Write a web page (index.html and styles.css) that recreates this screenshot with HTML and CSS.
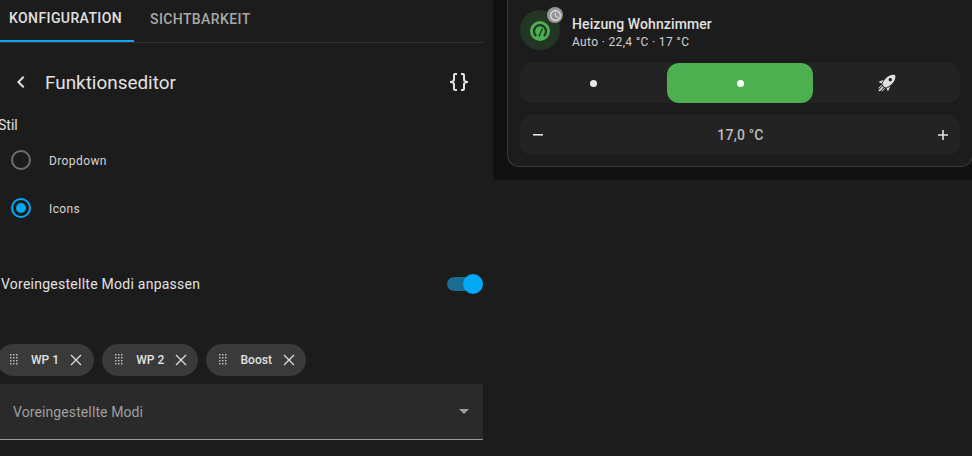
FILE: index.html
```html
<!DOCTYPE html>
<html lang="de">
<head>
<meta charset="utf-8">
<title>Funktionseditor</title>
<link rel="stylesheet" href="styles.css">
</head>
<body>
<main class="editor">
  <nav class="tabs">
    <div class="tab active">KONFIGURATION</div>
    <div class="tab">SICHTBARKEIT</div>
  </nav>
  <header class="head">
    <svg class="back" viewBox="0 0 24 24"><path d="M15.41 16.58L10.83 12l4.58-4.59L14 6l-6 6 6 6z"/></svg>
    <h1 class="title">Funktionseditor</h1>
    <svg class="code" viewBox="0 0 24 24"><path d="M8 3a2 2 0 0 0-2 2v4a2 2 0 0 1-2 2H3v2h1a2 2 0 0 1 2 2v4a2 2 0 0 0 2 2h2v-2H8v-5a2 2 0 0 0-2-2 2 2 0 0 0 2-2V5h2V3m6 0a2 2 0 0 1 2 2v4a2 2 0 0 0 2 2h1v2h-1a2 2 0 0 0-2 2v4a2 2 0 0 1-2 2h-2v-2h2v-5a2 2 0 0 1 2-2 2 2 0 0 1-2-2V5h-2V3h2z"/></svg>
  </header>
  <div class="group-label">Stil</div>
  <div class="radio-row"><span class="radio"></span><span class="radio-label">Dropdown</span></div>
  <div class="radio-row"><span class="radio on"></span><span class="radio-label">Icons</span></div>
  <div class="switch-row">
    <span class="switch-label">Voreingestellte Modi anpassen</span>
    <span class="switch"><span class="thumb"></span></span>
  </div>
  <div class="chips">
    <div class="chip chip-first">
      <svg class="grip" viewBox="0 0 8 12"><path d="M0 0h1.500v1.500H0zM3 0h1.500v1.500H3zM6 0h1.500v1.500H6zM0 3h1.500v1.500H0zM3 3h1.500v1.500H3zM6 3h1.500v1.500H6zM0 6h1.500v1.500H0zM3 6h1.500v1.500H3zM6 6h1.500v1.500H6zM0 9h1.500v1.500H0zM3 9h1.500v1.500H3zM6 9h1.500v1.500H6z"/></svg>
      <span class="chip-text">WP 1</span>
      <svg class="x" viewBox="0 0 12 12"><path d="M1 1l10 10M11 1L1 11"/></svg>
    </div>
    <div class="chip">
      <svg class="grip" viewBox="0 0 8 12"><path d="M0 0h1.500v1.500H0zM3 0h1.500v1.500H3zM6 0h1.500v1.500H6zM0 3h1.500v1.500H0zM3 3h1.500v1.500H3zM6 3h1.500v1.500H6zM0 6h1.500v1.500H0zM3 6h1.500v1.500H3zM6 6h1.500v1.500H6zM0 9h1.500v1.500H0zM3 9h1.500v1.500H3zM6 9h1.500v1.500H6z"/></svg>
      <span class="chip-text">WP 2</span>
      <svg class="x" viewBox="0 0 12 12"><path d="M1 1l10 10M11 1L1 11"/></svg>
    </div>
    <div class="chip">
      <svg class="grip" viewBox="0 0 8 12"><path d="M0 0h1.500v1.500H0zM3 0h1.500v1.500H3zM6 0h1.500v1.500H6zM0 3h1.500v1.500H0zM3 3h1.500v1.500H3zM6 3h1.500v1.500H6zM0 6h1.500v1.500H0zM3 6h1.500v1.500H3zM6 6h1.500v1.500H6zM0 9h1.500v1.500H0zM3 9h1.500v1.500H3zM6 9h1.500v1.500H6z"/></svg>
      <span class="chip-text">Boost</span>
      <svg class="x" viewBox="0 0 12 12"><path d="M1 1l10 10M11 1L1 11"/></svg>
    </div>
  </div>
  <div class="select">
    <span class="select-label">Voreingestellte Modi</span>
    <span class="caret"></span>
  </div>
</main>
<aside class="preview">
  <section class="card">
    <div class="entity">
      <div class="avatar">
        <svg class="gauge" viewBox="0 0 24 24"><circle class="gauge-disc" cx="12" cy="12" r="10"/><path class="gauge-arc" d="M8.200 16.800A6 6 0 1 1 15.800 16.800"/><path class="gauge-needle" d="M10.800 17.500L14.500 9.500"/></svg>
        <span class="badge"><svg viewBox="0 0 24 24"><path d="M12,20A8,8 0 0,0 20,12A8,8 0 0,0 12,4A8,8 0 0,0 4,12A8,8 0 0,0 12,20M12,2A10,10 0 0,1 22,12A10,10 0 0,1 12,22C6.47,22 2,17.5 2,12A10,10 0 0,1 12,2M12.5,7V12.25L17,14.92L16.25,16.15L11,13V7H12.5Z"/></svg></span>
      </div>
      <div class="info">
        <div class="name">Heizung Wohnzimmer</div>
        <div class="state">Auto · 22,4 °C · 17 °C</div>
      </div>
    </div>
    <div class="modes">
      <div class="mode"><span class="dot"></span></div>
      <div class="mode selected"><span class="dot"></span></div>
      <div class="mode"><svg class="rocket" viewBox="0 0 24 24"><path d="M13.13 22.19L11.5 18.36C13.07 17.78 14.54 17 15.9 16.09L13.13 22.19M5.64 12.5L1.81 10.87L7.91 8.1C7 9.46 6.22 10.93 5.64 12.5M21.61 2.39C21.61 2.39 16.66 .269 11 5.93C8.81 8.12 7.5 10.53 6.65 12.64C6.37 13.39 6.56 14.21 7.11 14.77L9.24 16.89C9.79 17.45 10.61 17.63 11.36 17.35C13.5 16.53 15.88 15.19 18.07 13C23.73 7.34 21.61 2.39 21.61 2.39M14.54 9.46C13.76 8.68 13.76 7.41 14.54 6.63S16.59 5.85 17.37 6.63C18.14 7.41 18.15 8.68 17.37 9.46C16.59 10.24 15.32 10.24 14.54 9.46M6.24 22L9.88 18.36C9.54 18.27 9.21 18.12 8.91 17.91L4.83 22H6.24M2 22H3.41L8.18 17.24L6.76 15.83L2 20.59V22M2 19.17L6.09 15.09C5.88 14.79 5.73 14.47 5.64 14.12L2 17.76V19.17Z"/></svg></div>
    </div>
    <div class="stepper">
      <svg class="step" viewBox="0 0 12 12"><path d="M1 5h10v1.600H1z"/></svg>
      <span class="temp">17,0 °C</span>
      <svg class="step" viewBox="0 0 12 12"><path d="M5.200 1h1.600v4.200H11v1.600H6.800V11H5.200V6.800H1V5.200h4.200z"/></svg>
    </div>
  </section>
</aside>
</body>
</html>
```
FILE: styles.css
```css
* { box-sizing: border-box; }
html, body { margin: 0; height: 456px; overflow: hidden; }
body {
  display: flex;
  align-items: flex-start;
  background: #1c1c1c;
  color: #e1e1e1;
  font-family: Roboto, "Liberation Sans", sans-serif;
}
.editor { width: 483px; flex: none; margin-right: 10px; }

.tabs { display: flex; height: 43px; border-bottom: 1px solid #333; }
.tab {
  height: 42px;
  padding: 0 16px;
  display: flex;
  align-items: center;
  padding-bottom: 5px;
  font-size: 14px;
  font-weight: 500;
  letter-spacing: .4px;
  color: #a8a8a8;
}
.tab.active {
  padding: 0 12px 5px 9px;
  width: 134px;
  color: #e1e1e1;
  border-bottom: 2px solid #03a9f4;
}

.head { display: flex; align-items: center; height: 40px; margin-top: 19px; padding: 0 12px 0 9px; }
.back { width: 24px; height: 24px; fill: #e1e1e1; }
.title { flex: 1; margin: 0 0 0 12px; font-size: 18.9px; font-weight: 400; color: #e1e1e1; }
.code { width: 24px; height: 24px; fill: #e1e1e1; }

.group-label { margin: 13px 0 0 -2px; height: 20px; line-height: 20px; font-size: 14px; }
.radio-row { display: flex; align-items: center; height: 48px; padding-left: 11px; position: relative; top: 1px; }
.radio { width: 20px; height: 20px; border: 2px solid #6f6f6f; border-radius: 50%; position: relative; flex: none; }
.radio.on { border-color: #03a9f4; }
.radio.on::after { content: ""; position: absolute; inset: 3px; border-radius: 50%; background: #03a9f4; }
.radio-label { margin-left: 18px; font-size: 12px; line-height: 14px; margin-top: 2px; letter-spacing: .4px; color: #d6d6d6; }

.switch-row { display: flex; align-items: center; justify-content: space-between; height: 40px; margin-top: 33px; padding-left: 1px; }
.switch-label { font-size: 14px; letter-spacing: .25px; color: #e1e1e1; }
.switch { position: relative; width: 28px; height: 14px; margin-right: 8px; border-radius: 7px; background: #1a6c92; }
.thumb { position: absolute; right: -8px; top: -3px; width: 20px; height: 20px; border-radius: 50%; background: #03a9f4; }

.chips { display: flex; gap: 8px; margin-top: 40px; }
.chip {
  display: flex;
  align-items: center;
  height: 32px;
  padding: 0 11px 0 13px;
  border-radius: 16px;
  background: #3a3a3a;
}
.chip-first { margin-left: -3px; padding-right: 12px; }
.grip { width: 8px; height: 12px; fill: #bdbdbd; flex: none; }
.chip-text { margin: 0 11px 0 13px; font-size: 12px; font-weight: 500; letter-spacing: .05px; color: #e1e1e1; }
.x { width: 12px; height: 12px; stroke: #e1e1e1; stroke-width: 1.2; fill: none; flex: none; }

.select {
  display: flex;
  align-items: center;
  justify-content: space-between;
  height: 56px;
  margin-top: 8px;
  padding: 0 14px 0 13px;
  background: #2a2a2a;
  border-bottom: 1px solid #9a9a9a;
}
.select-label { font-size: 14px; color: #9f9f9f; letter-spacing: .1px; }
.caret { width: 0; height: 0; border: 5px solid transparent; border-top-color: #9f9f9f; border-bottom: 0; }

.preview {
  flex: 1;
  height: 180px;
  padding: 0 0 0 14px;
  background: #111;
  border-bottom-left-radius: 4px;
}
.card {
  height: 167px;
  margin-right: -1px;
  padding: 10px 12px 0 12px;
  border: 1px solid #3a3a3a;
  border-top: 0;
  border-radius: 0 0 12px 12px;
  background: #1c1c1c;
}
.entity { display: flex; align-items: center; height: 40px; gap: 12px; }
.avatar { position: relative; width: 40px; height: 40px; flex: none; border-radius: 50%; background: #233523; display: flex; align-items: center; justify-content: center; }
.gauge { width: 24px; height: 24px; margin-top: 1px; }
.gauge-disc { fill: #4caf50; }
.gauge-arc { fill: none; stroke: #233523; stroke-width: 2.2; }
.gauge-needle { fill: none; stroke: #233523; stroke-width: 1.4; }
.badge { position: absolute; top: -3px; right: -3px; width: 16px; height: 16px; border-radius: 50%; background: #979797; display: flex; align-items: center; justify-content: center; }
.badge svg { width: 13px; height: 13px; fill: #e8e8e8; }
.info { padding-top: 3px; }
.name { font-size: 14px; font-weight: 500; line-height: 20px; letter-spacing: .1px; color: #e1e1e1; }
.state { font-size: 12px; line-height: 16px; letter-spacing: .34px; color: #d0d0d0; }

.modes { display: flex; height: 40px; margin-top: 13px; border-radius: 12px; background: #232323; }
.mode { flex: 1; display: flex; align-items: center; justify-content: center; border-radius: 12px; }
.mode.selected { background: #4caf50; }
.dot { width: 7px; height: 7px; border-radius: 50%; background: #e8e8e8; }
.mode.selected .dot { background: #fff; }
.rocket { width: 20px; height: 20px; fill: #e1e1e1; }

.stepper { display: flex; align-items: center; justify-content: space-between; height: 40px; margin-top: 12px; padding: 0 11px 0 12px; border-radius: 12px; background: #232323; }
.temp { font-size: 14px; font-weight: 500; letter-spacing: .2px; color: #bdbdbd; }
.step { width: 12px; height: 12px; fill: #e1e1e1; }
```
